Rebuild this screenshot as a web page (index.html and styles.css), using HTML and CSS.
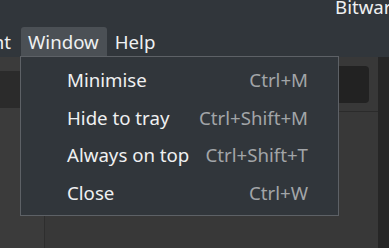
FILE: index.html
```html
<!DOCTYPE html>
<html lang="en">
<head>
    <meta charset="UTF-8">
    <meta name="viewport" content="width=device-width, initial-scale=1.0">
    <title>Bitwarden</title>
    <link rel="stylesheet" href="styles.css">
</head>
<body>

    <header class="titlebar">
        <span class="title">Bitwarden</span>
    </header>

    <nav class="menubar">
        <a class="menu-item cut" href="#"><span>Account</span></a>
        <a class="menu-item active" href="#">Window</a>
        <a class="menu-item" href="#">Help</a>
    </nav>

    <main class="app">
        <div class="sidebar">
            <div class="sidebar-row"></div>
        </div>
        <div class="pane">
            <div class="pane-head">
                <div class="search-box"></div>
            </div>
        </div>
        <div class="pane-edge"></div>

        <div class="dropdown">
            <div class="dropdown-item"><span>Minimise</span><span class="shortcut">Ctrl+M</span></div>
            <div class="dropdown-item"><span>Hide to tray</span><span class="shortcut">Ctrl+Shift+M</span></div>
            <div class="dropdown-item"><span>Always on top</span><span class="shortcut">Ctrl+Shift+T</span></div>
            <div class="dropdown-item"><span>Close</span><span class="shortcut">Ctrl+W</span></div>
        </div>
    </main>

</body>
</html>
```

FILE: styles.css
```css
body {
    font-family: 'Noto Sans', sans-serif;
    font-size: 18.67px;
    margin: 0;
    width: 389px;
    height: 248px;
    overflow: hidden;
    background-color: #31363b;
    color: #eff0f1;
}

.titlebar {
    height: 27px;
    padding-left: 335px;
    white-space: nowrap;
    overflow: hidden;
}

.title {
    display: block;
    line-height: 18px;
    margin-top: -2px;
}

.menubar {
    height: 30px;
    display: flex;
    align-items: stretch;
    white-space: nowrap;
}

.menu-item {
    color: #eff0f1;
    text-decoration: none;
    padding: 0 8px 0 7px;
    line-height: 30px;
    border-radius: 3px 3px 0 0;
}

.menu-item.cut {
    display: flex;
    justify-content: flex-end;
    width: 21px;
    box-sizing: border-box;
    padding: 0 10px 0 0;
    overflow: hidden;
}

.menu-item.active {
    background-color: #4b5055;
}

.menu-item:last-child {
    padding-left: 8px;
}

.app {
    position: relative;
    display: flex;
    height: 191px;
    background-color: #383838;
}

.sidebar {
    width: 44px;
    background-color: #3b3b3b;
    border-right: 1px solid #2e2e2e;
    padding-top: 14px;
}

.sidebar-row {
    height: 37px;
    background-color: #2b2b2b;
}

.pane {
    flex: 1;
}

.pane-head {
    height: 55px;
    border-bottom: 1px solid #2b2b2b;
    display: flex;
    justify-content: flex-end;
    align-items: flex-start;
    padding: 9px 9px 0 0;
    box-sizing: border-box;
}

.search-box {
    width: 80px;
    height: 37px;
    background-color: #222222;
    border-radius: 4px;
}

.pane-edge {
    width: 11px;
    background-color: #262626;
}

.dropdown {
    position: absolute;
    top: -1px;
    left: 20px;
    width: 317px;
    padding: 4px 0;
    background-color: #31363b;
    border: 1px solid #5d6166;
}

.dropdown-item {
    height: 37.5px;
    display: flex;
    align-items: center;
    justify-content: space-between;
    padding: 0 30px 0 46px;
    white-space: nowrap;
}

.shortcut {
    color: #a2a5a8;
}
```
